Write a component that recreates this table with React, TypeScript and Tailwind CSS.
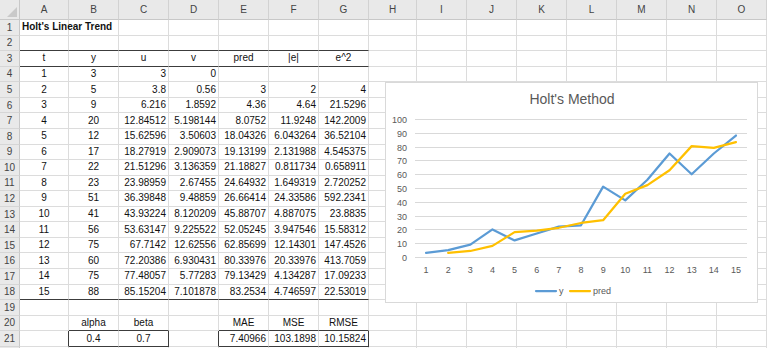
import React from "react";

const COLS = ["A", "B", "C", "D", "E", "F", "G", "H", "I", "J", "K", "L", "M", "N", "O"];

type Align = "c" | "r" | "l";
type Cell = { t: string; a: Align; b?: boolean };

const dataRows: (string | number)[][] = [
  [1, 3, "3", "0", "", "", ""],
  [2, 5, "3.8", "0.56", "3", "2", "4"],
  [3, 9, "6.216", "1.8592", "4.36", "4.64", "21.5296"],
  [4, 20, "12.84512", "5.198144", "8.0752", "11.9248", "142.2009"],
  [5, 12, "15.62596", "3.50603", "18.04326", "6.043264", "36.52104"],
  [6, 17, "18.27919", "2.909073", "19.13199", "2.131988", "4.545375"],
  [7, 22, "21.51296", "3.136359", "21.18827", "0.811734", "0.658911"],
  [8, 23, "23.98959", "2.67455", "24.64932", "1.649319", "2.720252"],
  [9, 51, "36.39848", "9.48859", "26.66414", "24.33586", "592.2341"],
  [10, 41, "43.93224", "8.120209", "45.88707", "4.887075", "23.8835"],
  [11, 56, "53.63147", "9.225522", "52.05245", "3.947546", "15.58312"],
  [12, 75, "67.7142", "12.62556", "62.85699", "12.14301", "147.4526"],
  [13, 60, "72.20386", "6.930431", "80.33976", "20.33976", "413.7059"],
  [14, 75, "77.48057", "5.77283", "79.13429", "4.134287", "17.09233"],
  [15, 88, "85.15204", "7.101878", "83.2534", "4.746597", "22.53019"],
];

function buildRows(): Cell[][] {
  const rows: Cell[][] = [];
  const empty = (): Cell[] => COLS.map(() => ({ t: "", a: "c" as Align }));
  const r1 = empty();
  r1[0] = { t: "Holt's Linear Trend", a: "l", b: true };
  rows.push(r1);
  rows.push(empty());
  const r3 = empty();
  ["t", "y", "u", "v", "pred", "|e|", "e^2"].forEach((t, i) => (r3[i] = { t, a: "c" }));
  rows.push(r3);
  dataRows.forEach((d) => {
    const r = empty();
    r[0] = { t: String(d[0]), a: "c" };
    r[1] = { t: String(d[1]), a: "c" };
    for (let i = 2; i < 7; i++) r[i] = { t: String(d[i]), a: "r" };
    rows.push(r);
  });
  rows.push(empty());
  const r20 = empty();
  r20[1] = { t: "alpha", a: "c" };
  r20[2] = { t: "beta", a: "c" };
  r20[4] = { t: "MAE", a: "c" };
  r20[5] = { t: "MSE", a: "c" };
  r20[6] = { t: "RMSE", a: "c" };
  rows.push(r20);
  const r21 = empty();
  r21[1] = { t: "0.4", a: "c" };
  r21[2] = { t: "0.7", a: "c" };
  r21[4] = { t: "7.40966", a: "r" };
  r21[5] = { t: "103.1898", a: "r" };
  r21[6] = { t: "10.15824", a: "r" };
  rows.push(r21);
  rows.push(empty());
  return rows;
}

const DARK = "#3c3c3c";
const LIGHT = "#dcdcdc";

function cellBorders(row: number, col: number) {
  let bottom = LIGHT;
  let right = LIGHT;
  if (col <= 6 && (row === 2 || row === 3 || row === 18)) bottom = DARK;
  if ((row === 20 || row === 21) && (col === 1 || col === 2 || col === 4 || col === 5 || col === 6)) bottom = DARK;
  if (row === 21 && (col === 0 || col === 2 || col === 3 || col === 6)) right = DARK;
  return { borderBottom: `1px solid ${bottom}`, borderRight: `1px solid ${right}` };
}

const yData = [3, 5, 9, 20, 12, 17, 22, 23, 51, 41, 56, 75, 60, 75, 88];
const predData = [null, 3, 4.36, 8.0752, 18.04326, 19.13199, 21.18827, 24.64932, 26.66414, 45.88707, 52.05245, 62.85699, 80.33976, 79.13429, 83.2534];

function Chart() {
  const W = 373;
  const H = 221;
  const x0 = 30;
  const x1 = 362;
  const y100 = 37;
  const y0 = 175;
  const step = (x1 - x0) / 15;
  const px = (i: number) => x0 + step * (i + 0.5);
  const py = (v: number) => y0 - ((y0 - y100) * v) / 100;
  const yPts = yData.map((v, i) => `${px(i).toFixed(2)},${py(v).toFixed(2)}`).join(" ");
  const pPts = predData
    .map((v, i) => (v === null ? null : `${px(i).toFixed(2)},${py(v).toFixed(2)}`))
    .filter(Boolean)
    .join(" ");
  const font = "'Liberation Sans', Arial, sans-serif";
  return (
    <div className="absolute left-[385px] top-[82px] w-[373px] h-[221px] bg-white border border-[#d9d9d9]">
      <svg width={W} height={H} className="block absolute left-[-1px] top-[-1px]">
        <text x={187} y={22} textAnchor="middle" fontFamily={font} fontSize={14} fill="#595959">
          Holt's Method
        </text>
        {Array.from({ length: 11 }).map((_, k) => {
          const v = k * 10;
          const y = Math.round(py(v)) + 0.5;
          return (
            <g key={k}>
              <line x1={x0} x2={x1} y1={y} y2={y} stroke="#d9d9d9" strokeWidth={1} />
              <text x={22} y={y + 3} textAnchor="end" fontFamily={font} fontSize={9} fill="#595959">
                {v}
              </text>
            </g>
          );
        })}
        {yData.map((_, i) => (
          <text key={i} x={px(i)} y={191} textAnchor="middle" fontFamily={font} fontSize={9} fill="#595959">
            {i + 1}
          </text>
        ))}
        <polyline points={yPts} fill="none" stroke="#5b9bd5" strokeWidth={2.25} strokeLinejoin="round" strokeLinecap="round" />
        <polyline points={pPts} fill="none" stroke="#ffc000" strokeWidth={2.25} strokeLinejoin="round" strokeLinecap="round" />
        <line x1={151} x2={171} y1={209} y2={209} stroke="#5b9bd5" strokeWidth={2.25} strokeLinecap="round" />
        <text x={174} y={212} fontFamily={font} fontSize={9} fill="#595959">
          y
        </text>
        <line x1={185} x2={205} y1={209} y2={209} stroke="#ffc000" strokeWidth={2.25} strokeLinecap="round" />
        <text x={208} y={212} fontFamily={font} fontSize={9} fill="#595959">
          pred
        </text>
      </svg>
    </div>
  );
}

export default function App() {
  const rows = buildRows();
  return (
    <div
      className="relative w-[768px] h-[348px] overflow-hidden bg-white text-[#111]"
      style={{ fontFamily: "'Liberation Sans', Arial, sans-serif" }}
    >
      <div className="grid grid-cols-[20px_49px_repeat(6,50px)_48px_repeat(7,50px)] grid-rows-[20px_repeat(22,15.57px)] w-[788px]">
        <div className="relative bg-[#e9e9e9] border-r border-b border-[#c8c8c8]">
          <div className="absolute right-[2px] bottom-[2px] w-0 h-0 border-l-[10px] border-l-transparent border-b-[10px] border-b-[#c9c9c9]" />
        </div>
        {COLS.map((c) => (
          <div
            key={c}
            className="flex items-center justify-center bg-[#e9e9e9] border-r border-r-[#d2d2d2] border-b border-b-[#c8c8c8] text-[10px] text-[#444]"
          >
            {c}
          </div>
        ))}
        {rows.map((r, ri) => (
          <React.Fragment key={ri}>
            <div className="flex items-center justify-center bg-[#e9e9e9] border-r border-r-[#c8c8c8] border-b border-b-[#d6d6d6] text-[10px] text-[#444]">
              {ri < 21 ? ri + 1 : ""}
            </div>
            {r.map((cell, ci) => (
              <div
                key={ci}
                style={cellBorders(ri + 1, ci)}
                className={
                  "flex items-center whitespace-nowrap text-[10px] leading-none overflow-visible " +
                  (cell.a === "r" ? "justify-end pr-[2px]" : cell.a === "l" ? "justify-start pl-[2px]" : "justify-center") +
                  (cell.b ? " font-bold text-[10.5px]" : "")
                }
              >
                {cell.t}
              </div>
            ))}
          </React.Fragment>
        ))}
      </div>
      <Chart />
    </div>
  );
}
